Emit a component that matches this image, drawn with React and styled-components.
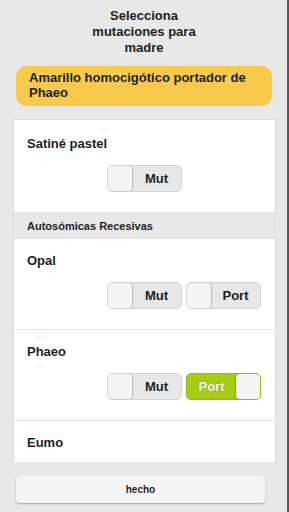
import React from "react";
import styled, { createGlobalStyle } from "styled-components";

const GlobalStyle = createGlobalStyle`
  html, body {
    margin: 0;
    padding: 0;
    background: #e8e8e8;
  }
  body {
    font-family: "Liberation Sans", Arial, Helvetica, sans-serif;
    color: #1e1e1e;
  }
`;

const Screen = styled.div`
  width: 289px;
  height: 512px;
  box-sizing: border-box;
  background: #e8e8e8;
  border-right: 2px solid #575757;
  display: flex;
  flex-direction: column;
  overflow: hidden;
`;

const Header = styled.div`
  padding: 8px 15px 13px 16px;
`;

const Title = styled.h1`
  margin: 0 auto;
  width: 120px;
  font-size: 13px;
  line-height: 16px;
  font-weight: bold;
  text-align: center;
`;

const Pill = styled.div`
  margin-top: 10px;
  background: #f8ca4c;
  border-radius: 10px;
  padding: 4px 13px 6px 13px;
  font-size: 13px;
  line-height: 15px;
  font-weight: bold;
`;

const List = styled.div`
  flex: 1;
  margin: 0 11px 0 13px;
  padding-top: 2px;
  background: #fff;
  border: 1px solid #dedede;
  border-bottom: none;
  overflow: hidden;
`;

const Row = styled.div`
  padding: 14px 14px 20px 13px;
  border-bottom: 1px solid #e6e6e6;
`;

const RowTitle = styled.div`
  font-size: 13px;
  line-height: 16px;
  font-weight: bold;
`;

const Controls = styled.div`
  margin-top: 13px;
  display: grid;
  grid-template-columns: 75px 75px;
  gap: 4px;
  justify-content: end;
`;

const Section = styled.div`
  height: 26px;
  box-sizing: border-box;
  display: flex;
  align-items: center;
  padding-left: 13px;
  background: #e8e8e8;
  border-bottom: 1px solid #e2e2e2;
  font-size: 11px;
  font-weight: bold;
`;

const Toggle = styled.div`
  grid-column: ${(p) => p.$col};
  height: 27px;
  box-sizing: border-box;
  display: flex;
  flex-direction: ${(p) => (p.$on ? "row-reverse" : "row")};
  align-items: stretch;
  border-radius: 5px;
  border: 1px solid ${(p) => (p.$on ? "#93bd0e" : "#d5d5d5")};
  background: ${(p) => (p.$on ? "#a5cd14" : "#e7e7e7")};
`;

const Knob = styled.div`
  width: 24px;
  border-radius: 4px;
  background: #f4f4f4;
  box-shadow: ${(p) =>
    p.$on ? "-1px 0 1px rgba(0,0,0,0.18)" : "1px 0 1px rgba(0,0,0,0.2)"};
`;

const ToggleLabel = styled.span`
  flex: 1;
  display: flex;
  align-items: center;
  justify-content: center;
  font-size: 13px;
  font-weight: bold;
  color: ${(p) => (p.$on ? "#fff" : "#1e1e1e")};
  text-shadow: ${(p) => (p.$on ? "0 0 1px rgba(0,0,0,0.45)" : "none")};
`;

const Footer = styled.div`
  height: 50px;
  flex-shrink: 0;
  box-sizing: border-box;
  padding: 14px 22px 0 16px;
`;

const DoneButton = styled.button`
  width: 100%;
  height: 27px;
  border: none;
  border-radius: 4px;
  background: #f5f5f5;
  box-shadow: 0 1px 2px rgba(0, 0, 0, 0.28);
  font-family: inherit;
  font-size: 10px;
  font-weight: bold;
  color: #1e1e1e;
`;

const Switch = ({ label, on, col }) => (
  <Toggle $on={on} $col={col}>
    <Knob $on={on} />
    <ToggleLabel $on={on}>{label}</ToggleLabel>
  </Toggle>
);

const rows = [
  { type: "row", name: "Satiné pastel", mut: false },
  { type: "section", name: "Autosómicas Recesivas" },
  { type: "row", name: "Opal", mut: false, port: false },
  { type: "row", name: "Phaeo", mut: false, port: true },
  { type: "row", name: "Eumo" },
];

export default function App() {
  return (
    <>
      <GlobalStyle />
      <Screen>
        <Header>
          <Title>Selecciona mutaciones para madre</Title>
          <Pill>Amarillo homocigótico portador de Phaeo</Pill>
        </Header>
        <List>
          {rows.map((r) =>
            r.type === "section" ? (
              <Section key={r.name}>{r.name}</Section>
            ) : (
              <Row key={r.name}>
                <RowTitle>{r.name}</RowTitle>
                {r.mut !== undefined && (
                  <Controls>
                    <Switch label="Mut" on={r.mut} col={1} />
                    {r.port !== undefined && (
                      <Switch label="Port" on={r.port} col={2} />
                    )}
                  </Controls>
                )}
              </Row>
            )
          )}
        </List>
        <Footer>
          <DoneButton>hecho</DoneButton>
        </Footer>
      </Screen>
    </>
  );
}
